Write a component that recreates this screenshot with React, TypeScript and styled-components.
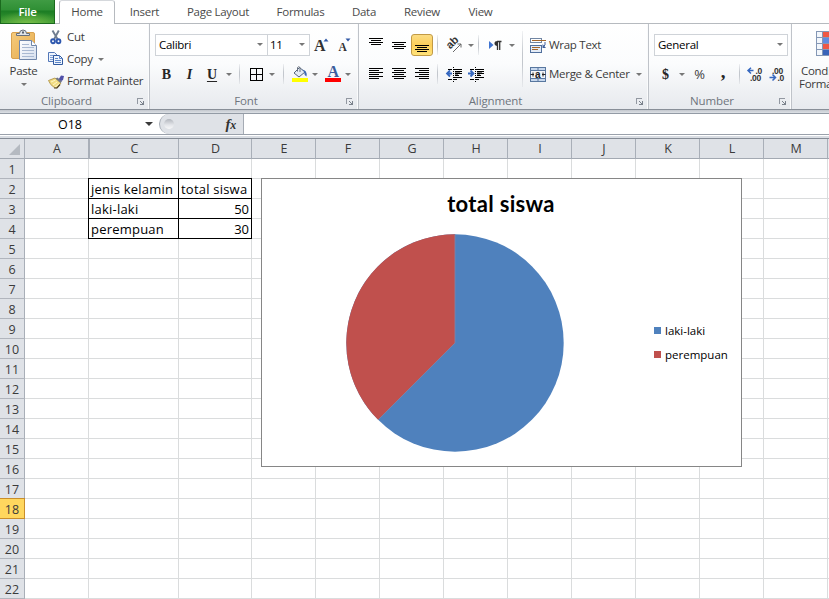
import React from 'react';
import styled, { createGlobalStyle, css } from 'styled-components';

const GlobalStyle = createGlobalStyle`
  *, *::before, *::after { box-sizing: border-box; }
  body { margin: 0; background: #fff; overflow: hidden; }
  svg { display: block; flex: none; overflow: visible; }
`;

const Window = styled.div`
  width: 829px;
  height: 599px;
  overflow: hidden;
  display: flex;
  flex-direction: column;
  background: #fff;
  font-family: 'Open Sans', sans-serif;
  font-size: 11.5px;
  letter-spacing: -0.28px;
  color: #3b3b3b;
  white-space: nowrap;
`;

/* ---------- Tabs ---------- */

const TabBar = styled.div`
  display: flex;
  flex: none;
  height: 24px;
  box-shadow: inset 0 -1px #b6babf;
`;

const Tab = styled.div<{ $w: number; $active?: boolean }>`
  width: ${p => p.$w}px;
  height: 24px;
  line-height: 24px;
  text-align: center;
  color: #4a4a4a;
  ${p => p.$active && css`
    border: 1px solid #b6babf;
    border-top-color: #d5d8dc;
    border-bottom: 0;
    border-radius: 3px 3px 0 0;
    background: #fff;
    line-height: 22px;
  `}
`;

const FileTab = styled.div`
  width: 55px;
  height: 24px;
  margin-right: 4px;
  line-height: 24px;
  text-align: center;
  color: #fff;
  font-weight: 600;
  border: 1px solid #1b6a1e;
  border-top: 0;
  background:
    radial-gradient(ellipse 34px 13px at 50% 105%, #7cc04a 0%, rgba(110, 184, 68, 0) 100%),
    linear-gradient(#3f9b43 0, #2f8f34 10px, #1c7d24 11px, #3b9a33 100%);
`;

/* ---------- Ribbon ---------- */

const Ribbon = styled.div`
  display: flex;
  flex: none;
  height: 85px;
  background: linear-gradient(#ffffff 0, #fbfcfd 40px, #eef0f3 68px, #e7eaee 85px);
`;

const Group = styled.section<{ $w: number; $last?: boolean }>`
  display: flex;
  flex-direction: column;
  flex: none;
  width: ${p => p.$w}px;
  height: 85px;
  padding-top: 7px;
  overflow: hidden;
  border-right: ${p => (p.$last ? 0 : '1px solid #bfc3c9')};
  box-shadow: inset -1px 0 #fafbfc;
`;

const ToolRows = styled.div`
  display: flex;
  height: 62px;
`;

const Stack = styled.div<{ $w?: number; $pl?: number }>`
  display: flex;
  flex-direction: column;
  flex: none;
  width: ${p => (p.$w ? `${p.$w}px` : 'auto')};
  padding-left: ${p => p.$pl ?? 0}px;
`;

const ToolRow = styled.div<{ $gap?: boolean }>`
  display: flex;
  align-items: center;
  height: 22px;
  margin-top: ${p => (p.$gap ? 7 : 3)}px;
`;

const ClipRow = styled.div<{ $h: number }>`
  display: flex;
  align-items: center;
  height: ${p => p.$h}px;
`;

const Tool = styled.div<{ $w: number; $on?: boolean }>`
  display: flex;
  align-items: center;
  justify-content: center;
  flex: none;
  width: ${p => p.$w}px;
  height: 22px;
  ${p => p.$on && css`
    border: 1px solid #c29a45;
    border-radius: 3px;
    background: linear-gradient(#fbdc83, #fdcf5b 50%, #ffe37a);
  `}
`;

const Serif = styled.span`
  padding-top: 1px;
  font: bold 14px/20px 'Liberation Serif', serif;
  letter-spacing: 0;
  color: #262626;
`;
const Italic = styled(Serif)`font-style: italic;`;
const Underlined = styled(Serif)`text-decoration: underline; text-underline-offset: 2px;`;
const Comma = styled(Serif)`font-size: 19px; padding-bottom: 6px;`;
const Percent = styled.span`
  padding-left: 1px;
  font-size: 13px;
  line-height: 20px;
`;

const Divider = styled.div<{ $h?: number }>`
  flex: none;
  width: 1px;
  height: ${p => p.$h ?? 20}px;
  background: linear-gradient(rgba(190, 195, 202, 0.2), #c3c7cd 40%, #c3c7cd 60%, rgba(190, 195, 202, 0.2));
`;

const Caret = styled.span<{ $dark?: boolean }>`
  flex: none;
  border: ${p => (p.$dark ? 4 : 3)}px solid transparent;
  border-top-color: ${p => (p.$dark ? '#3a3a3a' : '#777')};
  border-bottom: 0;
`;

const Combo = styled.div<{ $w: number; $joined?: boolean }>`
  display: flex;
  align-items: center;
  justify-content: space-between;
  flex: none;
  width: ${p => p.$w}px;
  height: 22px;
  padding: 0 4px 2px ${p => (p.$joined ? 2 : 3)}px;
  border: 1px solid #cfd3d8;
  border-left-width: ${p => (p.$joined ? 0 : 1)}px;
  background: #fff;
  color: #000;
`;

const Label = styled.span<{ $ml?: number; $mr?: number }>`
  margin-left: ${p => p.$ml ?? 0}px;
  margin-right: ${p => p.$mr ?? 0}px;
  padding-bottom: 2px;
`;

const GroupFooter = styled.div`
  display: flex;
  align-items: center;
  height: 15px;
  color: #6f757d;
  letter-spacing: -0.12px;
`;

const FooterText = styled.span`
  flex: 1;
  margin-right: 4px;
  text-align: center;
`;

const Launcher = styled.span`
  margin: 2px 4px 0 0;
`;

const PasteButton = styled.div`
  display: flex;
  flex-direction: column;
  align-items: center;
  flex: none;
  width: 47px;
  height: 60px;
`;
const PasteText = styled.span`
  margin: 0 0 4px;
  line-height: 16px;
`;

const Conditional = styled.div`
  display: flex;
  flex-direction: column;
  width: 60px;
  padding-left: 7px;
  line-height: 13px;
`;
const ConditionalIcon = styled.div`
  padding: 0 0 8px 17px;
`;
const ConditionalText = styled.span<{ $indent?: boolean }>`
  height: 13px;
  padding-left: ${p => (p.$indent ? 2 : 0)}px;
`;

/* ---------- Formula bar ---------- */

const RibbonEdge = styled.div`
  flex: none;
  height: 5px;
  border-top: 1px solid #888f98;
  border-bottom: 1px solid #939ba5;
  background: linear-gradient(#c3c7cd, #dde1e6);
`;

const FormulaBar = styled.div`
  display: flex;
  flex: none;
  height: 21px;
  border-bottom: 1px solid #9aa1ab;
`;

const NameBox = styled.div`
  display: flex;
  align-items: center;
  width: 159px;
  padding: 0 6px 0 58px;
  justify-content: space-between;
  color: #000;
  font-size: 12.5px;
  letter-spacing: 0;
`;

const FunctionArea = styled.div`
  display: flex;
  align-items: center;
  justify-content: space-between;
  width: 85px;
  height: 20px;
  padding: 0 7px 0 4px;
  border: 1px solid #a5abb4;
  border-width: 0 1px 0 1px;
  border-radius: 10px 0 0 10px;
  background: #dfe2e7;
`;

const Knob = styled.span`
  width: 10px;
  height: 10px;
  border-radius: 5px;
  background: linear-gradient(#b2b6bd, #e4e6ea 60%, #f7f8f9);
`;

const Fx = styled.span`
  font: italic bold 15px/18px 'Liberation Serif', serif;
  color: #333;
`;
const FxSub = styled.span`font-size: 12px;`;

const SheetEdge = styled.div`
  flex: none;
  height: 4px;
  border-bottom: 1px solid #858c96;
  background: linear-gradient(#fff 1px, #d9dde3 1px);
`;

/* ---------- Sheet ---------- */

const Sheet = styled.div`
  position: relative;
  flex: none;
  width: 829px;
  height: 460px;
`;

const Row = styled.div`
  display: grid;
  grid-template-columns: 25px 64px 90px 73px repeat(9, 64px) 1px;
  height: 20px;
`;

const ColumnHead = styled.div<{ $afterHidden?: boolean }>`
  display: flex;
  align-items: center;
  justify-content: center;
  padding-left: 1px;
  border-right: 1px solid #a9afb8;
  border-bottom: 1px solid #a3a9b2;
  border-left: ${p => (p.$afterHidden ? '1px solid #a9afb8' : '0')};
  background: #dfe2e7;
  font-size: 12.5px;
  letter-spacing: 0;
`;

const Corner = styled(ColumnHead)`
  justify-content: flex-end;
  padding: 2px 4px 0 0;
`;

const RowHead = styled.div<{ $on?: boolean }>`
  display: flex;
  align-items: center;
  justify-content: center;
  padding-top: 2px;
  border-right: 1px solid ${p => (p.$on ? '#c98e2b' : '#a9afb8')};
  border-bottom: 1px solid ${p => (p.$on ? '#c98e2b' : '#b1b5bd')};
  background: ${p => (p.$on ? '#ffd75e' : '#dfe2e7')};
  box-shadow: ${p => (p.$on ? '0 -1px #c98e2b' : 'none')};
  font-size: 12.5px;
  letter-spacing: 0;
`;

const Cell = styled.div<{ $box?: boolean; $top?: boolean; $left?: boolean; $right?: boolean }>`
  height: 20px;
  padding: 1px 2px 0;
  border-right: 1px solid #dadcdd;
  border-bottom: 1px solid #dadcdd;
  color: #000;
  font-size: 13px;
  line-height: 18px;
  letter-spacing: 0.25px;
  text-align: ${p => (p.$right ? 'right' : 'left')};
  ${p => p.$box && css`
    border-color: #000;
    letter-spacing: ${p.$right ? 0 : 0.22}px;
    box-shadow: ${p.$left ? '-1px 0 #000' : '0 0 transparent'}, ${p.$top ? '0 -1px #000' : '0 0 transparent'}, ${p.$top && p.$left ? '-1px -1px #000' : '0 0 transparent'};
  `}
`;

/* The chart floats over the cells, as an embedded object. */
const Chart = styled.figure`
  position: absolute;
  left: 261px;
  top: 39px;
  width: 481px;
  height: 289px;
  margin: 0;
  border: 1px solid #868686;
  background: #fff;
  display: grid;
  grid-template-columns: 84px 218px 89px 1fr;
  grid-template-rows: 55px 1fr;
  color: #000;
`;

const ChartTitle = styled.figcaption`
  grid-column: 1 / -1;
  padding-top: 10px;
  padding-right: 1px;
  text-align: center;
  font: bold 22px/30px Lato, sans-serif;
  letter-spacing: 0.3px;
`;

const PieSlot = styled.div`
  grid-column: 2;
`;

const Legend = styled.ul`
  grid-column: 4;
  display: flex;
  flex-direction: column;
  gap: 8px;
  margin: 88px 0 0 0;
  padding: 0;
  list-style: none;
`;

const LegendItem = styled.li<{ $color: string }>`
  display: flex;
  align-items: center;
  gap: 4px;
  height: 16px;
  letter-spacing: 0;
  &::before {
    content: '';
    width: 7px;
    height: 7px;
    margin-left: 1px;
    background: ${p => p.$color};
  }
`;

/* ---------- Icons ---------- */

/** Horizontal 1px strokes given as [x, y, width]. */
const Lines = ({ w, h, bars, shift = 0 }: { w: number; h: number; bars: number[][]; shift?: number }) => (
  <svg width={w} height={h + shift} shapeRendering="crispEdges">
    {bars.map(([x, y, l], i) => <rect key={i} x={x} y={y + shift} width={l} height="1" fill="#000" />)}
  </svg>
);

const vertical = [[0, 0, 14], [2, 2, 10], [0, 4, 14], [2, 6, 10]];
const alignLeft = [0, 1, 2, 3, 4, 5].map(i => [0, i * 2, i % 2 ? 10 : 14]);
const alignCenter = [0, 1, 2, 3, 4, 5].map(i => [i % 2 ? 2 : 0, i * 2, i % 2 ? 10 : 14]);
const alignRight = [0, 1, 2, 3, 4, 5].map(i => [i % 2 ? 4 : 0, i * 2, i % 2 ? 10 : 14]);

const LauncherIcon = () => (
  <svg width="8" height="8" shapeRendering="crispEdges">
    <path d="M0 6V0H6V1H1V6z" fill="#9298a1" />
    <path d="M3 3h1v1h1v1h1v-2h1v4h-4v-1h2v-1h-1v-1h-1z" fill="#7b828c" />
  </svg>
);

const PasteIcon = () => (
  <svg width="28" height="32" viewBox="0 0 28 32">
    <defs>
      <linearGradient id="board" x1="0" y1="0" x2="1" y2="1">
        <stop offset="0" stopColor="#f6cb7c" /><stop offset="1" stopColor="#e5ab4e" />
      </linearGradient>
      <linearGradient id="sheet" x1="0" y1="0" x2="1" y2="1">
        <stop offset="0" stopColor="#fff" /><stop offset="1" stopColor="#d5dfee" />
      </linearGradient>
    </defs>
    <rect x="1.5" y="1.5" width="23" height="26" rx="1.5" fill="url(#board)" stroke="#d9a250" />
    <path d="M6.500 4.500V2.500H9.500Q9.500 -1 13 -1T16.500 2.500H19.500V4.500z" fill="#dfe3e8" stroke="#68707c" />
    <rect x="12" y="0.500" width="2" height="2" fill="#59616d" />
    <path d="M9.500 9.500H21.500L26.500 14.500V28.500H9.500z" fill="url(#sheet)" stroke="#6f86aa" />
    <path d="M21.500 9.500V14.500H26.500" fill="#fff" stroke="#6f86aa" />
    <path d="M12 13.500H19M12 16.500H24M12 19.500H24M12 22.500H24M12 25.500H24" stroke="#a9b9d2" />
  </svg>
);

const CutIcon = () => (
  <svg width="12" height="15" viewBox="0 0 12 15" fill="none">
    <path d="M2.500 0.500L7.500 9M8.800 0.500L4.200 9" stroke="#6f7d90" strokeWidth="1.900" />
    <ellipse cx="3" cy="11.300" rx="1.900" ry="2" stroke="#2d57ae" strokeWidth="1.900" />
    <ellipse cx="8.500" cy="11.300" rx="1.900" ry="2" stroke="#2d57ae" strokeWidth="1.900" />
  </svg>
);

const CopyIcon = () => (
  <svg width="16" height="14" viewBox="0 0 16 14">
    <path d="M0.500 0.500H6.500L9.500 3.500V9.500H0.500z" fill="#eef4fd" stroke="#5277b8" />
    <path d="M2 3.500H6M2 5.500H6M2 7.500H6" stroke="#7f9fd4" />
    <path d="M5.500 3.500H11.500L14.500 6.500V12.500H5.500z" fill="#eef4fd" stroke="#315a9f" />
    <path d="M11.500 3.500V6.500H14.500M7 6.500H10M7 8.500H13M7 10.500H13" fill="none" stroke="#5d86c8" />
  </svg>
);

const BrushIcon = () => (
  <svg width="17" height="14" viewBox="0 0 17 14">
    <path d="M10.500 4.500L13 0.500L16 1L15 5L12.500 6.500z" fill="#4f4fa8" />
    <path d="M0.500 5.500L7 3L13 8L9 13Q4 13 0.500 5.500z" fill="#f1dc83" stroke="#a88a3a" strokeWidth="0.800" />
    <path d="M3 7L7.500 5M5 10L9 7M7 12L11 9" stroke="#fff6c4" />
    <path d="M7.500 3.500L9.500 2.500L14 6.500L12.500 8z" fill="#70778a" />
    <path d="M6 13L9 13L12 9.500" fill="none" stroke="#4c4022" strokeWidth="1.200" />
  </svg>
);

const GrowIcon = ({ down }: { down?: boolean }) => (
  <svg width="16" height="18" viewBox="0 0 16 18">
    <text x={down ? 2.5 : 1} y="15" fontFamily="Liberation Serif" fontWeight="bold" fontSize={down ? 11.5 : 16} fill="#333">A</text>
    <path d={down ? 'M9.500 2.500H14.500L12 5.500z' : 'M10.500 5.500H15.500L13 2.500z'} fill="#3259a6" />
  </svg>
);

const BorderIcon = () => (
  <svg width="13" height="13" shapeRendering="crispEdges">
    <path d="M0.500 0.500H12.500V12.500H0.500zM6.500 0V13M0 6.500H13" fill="none" stroke="#000" />
  </svg>
);

const FillIcon = () => (
  <svg width="16" height="17" viewBox="0 0 16 17">
    <path d="M2 7L7.500 1.500L13 6L7 11z" fill="#e3eaf4" stroke="#55657d" />
    <path d="M5.500 5.500V1.500Q6.500 0 8 1.500V6" fill="none" stroke="#68717f" />
    <path d="M10 3.500Q15.500 4 14.500 10.500Q12 9 12 5.500z" fill="#3e69b2" />
    <rect y="12" width="16" height="4" fill="#ff0" />
  </svg>
);

const FontColorIcon = () => (
  <svg width="16" height="17" viewBox="0 0 16 17">
    <text x="2.500" y="11" fontFamily="Liberation Serif" fontWeight="bold" fontSize="16" fill="#3c5d9c">A</text>
    <rect y="12" width="16" height="4" fill="#f00" />
  </svg>
);

const OrientationIcon = () => (
  <svg width="16" height="15" viewBox="0 0 16 15">
    <text x="2.500" y="10.500" transform="rotate(-45 4 10)" fontFamily="Liberation Sans" fontWeight="bold" fontSize="11" fill="#333">ab</text>
    <path d="M6 14L14 6M14 9.500V6H10.500" fill="none" stroke="#666" />
  </svg>
);

const DirectionIcon = () => (
  <svg width="14" height="11" viewBox="0 0 14 11">
    <path d="M0 1L4.500 5L0 9z" fill="#3f73d0" />
    <path d="M8.500 1.500V10M10.700 1.500V10M8 1.500H12.500" stroke="#333" fill="none" strokeWidth="1.300" />
    <path d="M8.500 1Q5.500 1 5.500 3.400T8.500 6z" fill="#333" />
  </svg>
);

const IndentIcon = ({ right }: { right?: boolean }) => (
  <svg width="16" height="15" viewBox="0 0 16 15">
    <path d="M2 2.500H6M7 2.500H16M9 4.500H16M9 6.500H16M9 8.500H13M7 10.500H16M2 12.500H6M7 12.500H11" stroke="#000" shapeRendering="crispEdges" />
    <path d="M9 5.500H14M9 7.500H12" stroke="#000" strokeOpacity="0.500" />
    <path d="M7.500 0V15" stroke="#000" strokeDasharray="1 1" />
    <path d={right ? 'M0 6.500H4M2.500 3.500L5.500 6.500L2.500 9.500' : 'M6 6.500H1M4 3.500L1 6.500L4 9.500'} stroke="#3668c0" strokeWidth="1.800" fill="none" />
  </svg>
);

const WrapIcon = () => (
  <svg width="16" height="15" viewBox="0 0 16 15">
    <rect x="0.500" y="0.500" width="11" height="4" fill="#fff" stroke="#7186a3" />
    <path d="M2 2.500H16" stroke="#a4662b" />
    <rect x="0.500" y="7.500" width="11" height="7" fill="#e5ecf6" stroke="#516f9c" />
    <path d="M2 9.500H10M2 11.500H8" stroke="#a4662b" />
    <path d="M15 4V7L13.500 8.500" stroke="#3e5f9d" fill="none" />
    <path d="M12.500 6V10H16z" fill="#3e5f9d" />
  </svg>
);

const MergeIcon = () => (
  <svg width="16" height="15" viewBox="0 0 16 15">
    <rect x="0.500" y="0.500" width="15" height="14" fill="#c7d8ee" stroke="#58779f" />
    <path d="M8 0V3M8 12V15M0 3.500H16M0 11.500H16" stroke="#58779f" />
    <rect x="1" y="4" width="14" height="7" fill="#f4f6f9" />
    <path d="M0.500 7.500H4M3 5.500V9.500M12 7.500H15.500M13 5.500V9.500" stroke="#222" />
    <text x="5" y="10.500" fontFamily="Liberation Sans" fontWeight="bold" fontSize="10" fill="#222">a</text>
  </svg>
);

const DecimalIcon = ({ less }: { less?: boolean }) => (
  <svg width="16" height="15" viewBox="0 0 16 15" fontFamily="Liberation Sans" fontWeight="bold" fontSize="8.5" fill="#333">
    <text x={less ? 3 : 8.5} y="6.500">{less ? '.00' : '.0'}</text>
    <text x={less ? 8.5 : 3} y="13.500">{less ? '.0' : '.00'}</text>
    <path d={less ? 'M0.500 10.500H6M3.500 7.500L6.500 10.500L3.500 13.500' : 'M6.500 3.500H1M4 0.700L1 3.500L4 6.500'} fill="none" stroke="#3668c0" strokeWidth="1.500" />
  </svg>
);

const ConditionalFormatIcon = () => (
  <svg width="26" height="25" viewBox="0 0 26 25" shapeRendering="crispEdges">
    <rect width="26" height="25" fill="#8497b5" />
    {['#ee5844', '#5f8be0', '#ee5844', '#3963b8'].map((c, i) => (
      <React.Fragment key={i}>
        <rect x="1" y={1 + i * 6} width="5" height="5" fill="#f2f6fb" />
        <rect x="7" y={1 + i * 6} width="18" height="5" fill={c} />
      </React.Fragment>
    ))}
  </svg>
);

const CornerIcon = () => (
  <svg width="11" height="11"><path d="M11 0V11H0z" fill="#b5bac1" /></svg>
);

const Pie = () => (
  <svg width="218" height="218" viewBox="-109 -109 218 218">
    <circle r="108.700" fill="#4f81bd" />
    <path d="M0 0V-108.700A108.700 108.700 0 0 0 -76.860 76.860z" fill="#c0504d" />
    <path d="M-76.860 76.860L0 0V-108.700" fill="none" stroke="#7d86ab" strokeWidth="0.800" />
  </svg>
);

/* ---------- Page ---------- */

const Footer = ({ children }: { children: string }) => (
  <GroupFooter>
    <FooterText>{children}</FooterText>
    <Launcher><LauncherIcon /></Launcher>
  </GroupFooter>
);

const tabs: [string, number][] = [
  ['Insert', 57], ['Page Layout', 90], ['Formulas', 75], ['Data', 52], ['Review', 64], ['View', 53],
];
const columns = ['A', 'C', 'D', 'E', 'F', 'G', 'H', 'I', 'J', 'K', 'L', 'M', ''];
const rowNumbers = Array.from({ length: 22 }, (_, i) => i + 1);
const values: Record<string, string> = {
  C2: 'jenis kelamin', D2: 'total siswa', C3: 'laki-laki', D3: '50', C4: 'perempuan', D4: '30',
};

export default function App() {
  return (
    <Window>
      <GlobalStyle />
      <TabBar>
        <FileTab>File</FileTab>
        <Tab $w={56} $active>Home</Tab>
        <Tab $w={1} />
        {tabs.map(([name, w]) => <Tab key={name} $w={w}>{name}</Tab>)}
      </TabBar>

      <Ribbon>
        <Group $w={150}>
          <ToolRows>
            <PasteButton>
              <PasteIcon />
              <PasteText>Paste</PasteText>
              <Caret />
            </PasteButton>
            <Stack $pl={1}>
              <ClipRow $h={13}><Tool $w={16}><CutIcon /></Tool><Label $ml={3}>Cut</Label></ClipRow>
              <ClipRow $h={30}><CopyIcon /><Label $ml={3} $mr={5}>Copy</Label><Caret /></ClipRow>
              <ClipRow $h={15}><BrushIcon /><Label $ml={2}>Format Painter</Label></ClipRow>
            </Stack>
          </ToolRows>
          <Footer>Clipboard</Footer>
        </Group>

        <Group $w={209}>
          <ToolRows>
            <Stack $pl={5}>
              <ToolRow>
                <Combo $w={113}>Calibri<Caret /></Combo>
                <Combo $w={42} $joined>11<Caret /></Combo>
                <Tool $w={22}><GrowIcon /></Tool>
                <Tool $w={24}><GrowIcon down /></Tool>
              </ToolRow>
              <ToolRow $gap>
                <Tool $w={23}><Serif>B</Serif></Tool>
                <Tool $w={23}><Italic>I</Italic></Tool>
                <Tool $w={22}><Underlined>U</Underlined></Tool>
                <Tool $w={11}><Caret /></Tool>
                <Tool $w={10}><Divider /></Tool>
                <Tool $w={25}><BorderIcon /></Tool>
                <Tool $w={6}><Caret /></Tool>
                <Tool $w={17}><Divider /></Tool>
                <Tool $w={16}><FillIcon /></Tool>
                <Tool $w={14}><Caret /></Tool>
                <Tool $w={22}><FontColorIcon /></Tool>
                <Tool $w={8}><Caret /></Tool>
              </ToolRow>
            </Stack>
          </ToolRows>
          <Footer>Font</Footer>
        </Group>

        <Group $w={290}>
          <ToolRows>
            <Stack $w={163} $pl={6}>
              <ToolRow>
                <Tool $w={22}><Lines w={14} h={14} bars={vertical} /></Tool>
                <Tool $w={24}><Lines w={14} h={7} bars={vertical} /></Tool>
                <Tool $w={22} $on><Lines w={14} h={7} shift={7} bars={vertical} /></Tool>
                <Tool $w={9}><Divider /></Tool>
                <Tool $w={26}><OrientationIcon /></Tool>
                <Tool $w={5}><Caret /></Tool>
                <Tool $w={11}><Divider /></Tool>
                <Tool $w={23}><DirectionIcon /></Tool>
                <Tool $w={10}><Caret /></Tool>
              </ToolRow>
              <ToolRow $gap>
                <Tool $w={22}><Lines w={14} h={13} bars={alignLeft} /></Tool>
                <Tool $w={24}><Lines w={14} h={13} bars={alignCenter} /></Tool>
                <Tool $w={22}><Lines w={14} h={13} bars={alignRight} /></Tool>
                <Tool $w={9}><Divider /></Tool>
                <Tool $w={24}><IndentIcon /></Tool>
                <Tool $w={20}><IndentIcon right /></Tool>
              </ToolRow>
            </Stack>
            <Divider $h={56} />
            <Stack $pl={7}>
              <ToolRow><WrapIcon /><Label $ml={3}>Wrap Text</Label></ToolRow>
              <ToolRow $gap><MergeIcon /><Label $ml={3} $mr={6}>Merge &amp; Center</Label><Caret /></ToolRow>
            </Stack>
          </ToolRows>
          <Footer>Alignment</Footer>
        </Group>

        <Group $w={143}>
          <ToolRows>
            <Stack $pl={5}>
              <ToolRow><Combo $w={134}>General<Caret /></Combo></ToolRow>
              <ToolRow $gap>
                <Tool $w={23}><Serif>$</Serif></Tool>
                <Tool $w={9}><Caret /></Tool>
                <Tool $w={26}><Percent>%</Percent></Tool>
                <Tool $w={22}><Comma>,</Comma></Tool>
                <Tool $w={10}><Divider /></Tool>
                <Tool $w={22}><DecimalIcon /></Tool>
                <Tool $w={22}><DecimalIcon less /></Tool>
              </ToolRow>
            </Stack>
          </ToolRows>
          <Footer>Number</Footer>
        </Group>

        <Group $w={60} $last>
          <Conditional>
            <ConditionalIcon><ConditionalFormatIcon /></ConditionalIcon>
            <ConditionalText $indent>Conditional</ConditionalText>
            <ConditionalText>Formatting</ConditionalText>
          </Conditional>
        </Group>
      </Ribbon>

      <RibbonEdge />
      <FormulaBar>
        <NameBox>O18<Caret $dark /></NameBox>
        <FunctionArea><Knob /><Fx>f<FxSub>x</FxSub></Fx></FunctionArea>
      </FormulaBar>
      <SheetEdge />

      <Sheet>
        <Row>
          <Corner><CornerIcon /></Corner>
          {columns.map(c => <ColumnHead key={c} $afterHidden={c === 'C'}>{c}</ColumnHead>)}
        </Row>
        {rowNumbers.map(n => (
          <Row key={n}>
            <RowHead $on={n === 18}>{n}</RowHead>
            {columns.map(c => {
              const value = values[c + n];
              return (
                <Cell key={c} $box={!!value} $top={n === 2} $left={c === 'C'} $right={c === 'D' && n > 2}>{value}</Cell>
              );
            })}
          </Row>
        ))}
        <Chart>
          <ChartTitle>total siswa</ChartTitle>
          <PieSlot><Pie /></PieSlot>
          <Legend>
            <LegendItem $color="#4f81bd">laki-laki</LegendItem>
            <LegendItem $color="#c0504d">perempuan</LegendItem>
          </Legend>
        </Chart>
      </Sheet>
    </Window>
  );
}
